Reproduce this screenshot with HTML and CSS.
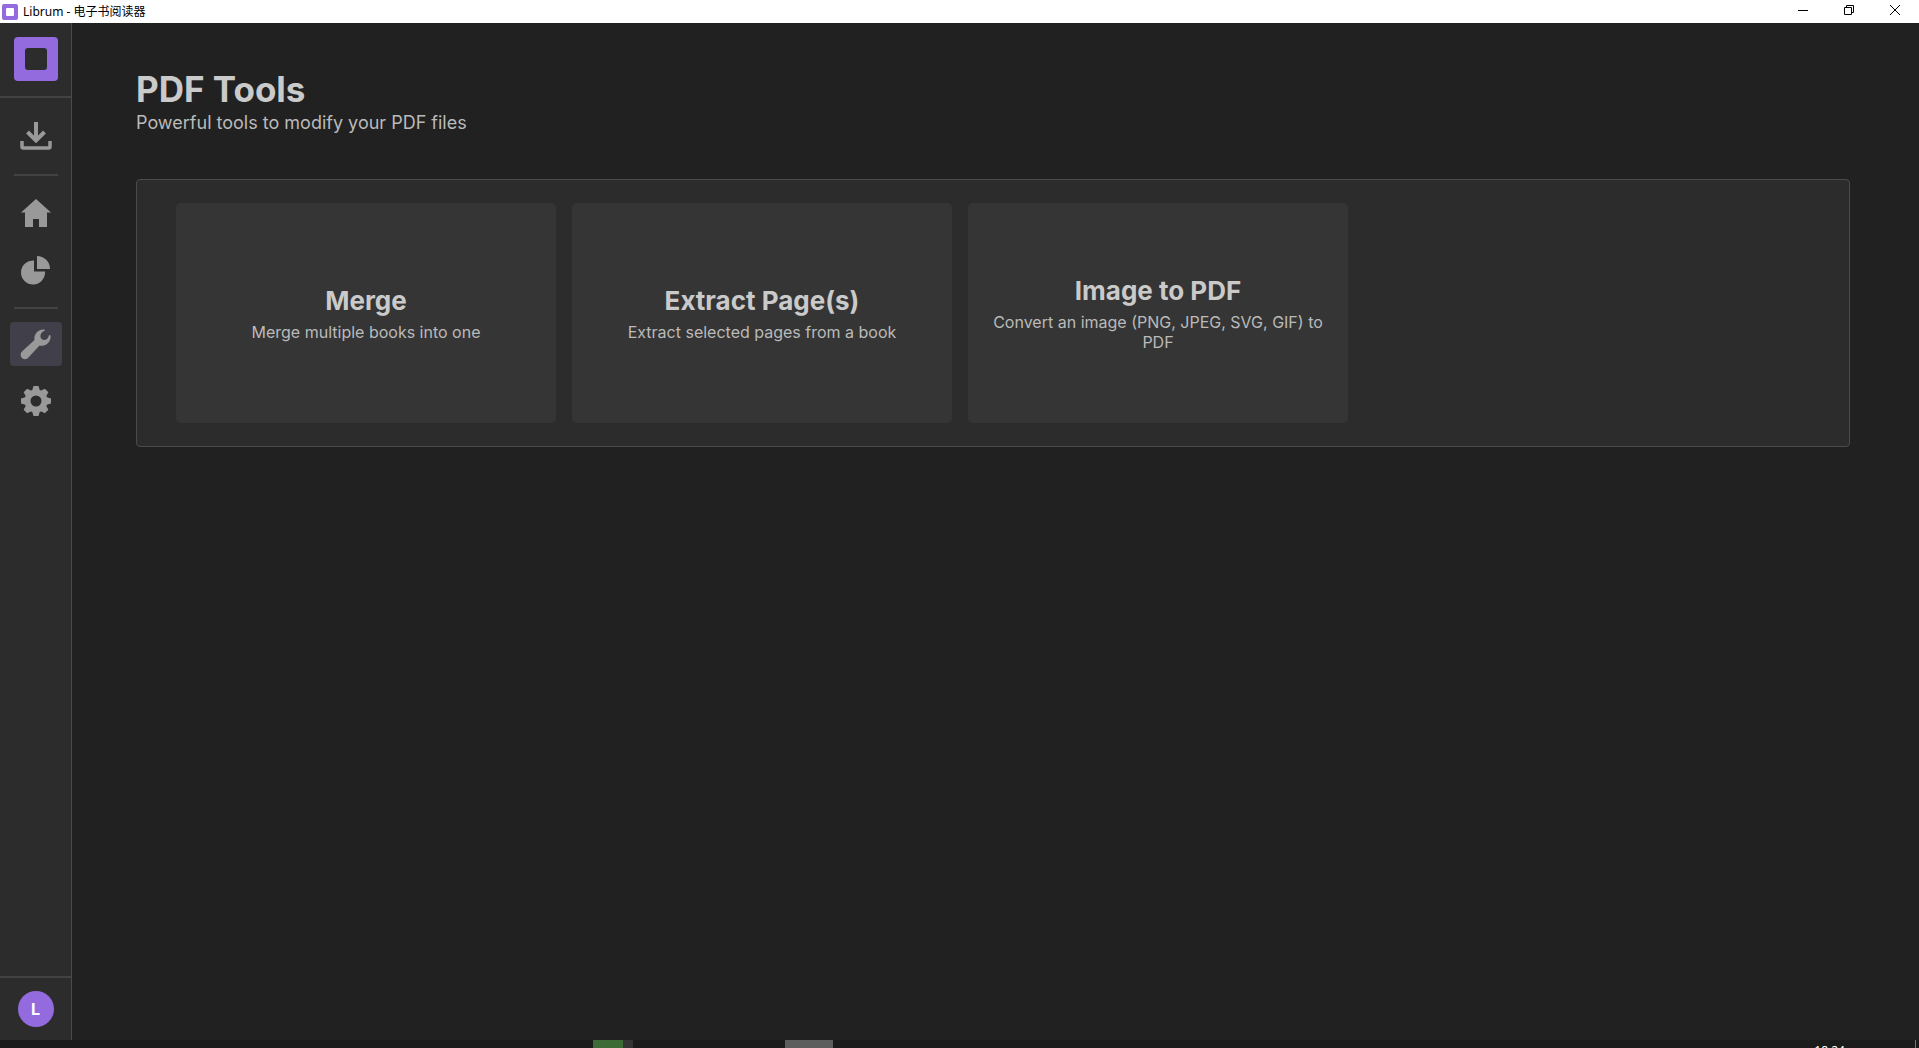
FILE: index.html
```html
<!DOCTYPE html>
<html lang="zh-CN">
<head>
<meta charset="utf-8">
<title>Librum - 电子书阅读器</title>
<link rel="stylesheet" href="styles.css">
</head>
<body>
<header class="titlebar">
  <svg class="app-icon" viewBox="0 0 16 16" aria-hidden="true"><rect width="16" height="16" rx="2" fill="#946bde"/><rect x="4" y="4" width="8" height="8" rx="1" fill="#fff"/></svg>
  <span class="window-title">Librum - 电子书阅读器</span>
  <div class="window-controls">
    <button class="window-button" aria-label="Minimize"><svg viewBox="0 0 10 10"><path d="M0 5.500h10"/></svg></button>
    <button class="window-button" aria-label="Restore"><svg viewBox="0 0 10 10"><path d="M.5 2.500h7v7h-7zM2.500 2.500v-2h7v7h-2"/></svg></button>
    <button class="window-button" aria-label="Close"><svg viewBox="0 0 10 10"><path d="M0 0l10 10M10 0L0 10"/></svg></button>
  </div>
</header>
<div class="workspace">
  <nav class="sidebar">
    <a class="logo" href="#" aria-label="Librum"><svg viewBox="0 0 44 44"><rect width="44" height="44" rx="4" fill="#946bde"/><rect x="11" y="11" width="22" height="22" rx="3" fill="#2c2c2c"/></svg></a>
    <hr class="rule">
    <a class="nav-item nav-item-import" href="#" aria-label="Import"><svg viewBox="0 0 32 32"><g fill="none" stroke="#999" stroke-width="4"><path d="M16 2v17M7.500 12l8.500 8.500L24.500 12" /><path d="M2 21v5.500q0 1.500 1.500 1.500h25q1.500 0 1.500-1.500V21" stroke-width="3.500"/></g></svg></a>
    <hr class="rule rule-short">
    <a class="nav-item nav-item-first" href="#" aria-label="Home"><svg viewBox="0 0 32 32"><path fill="#999" d="M16 2L31 15.500h-4V30h-8v-8h-6v8H5V15.500H1z"/></svg></a>
    <a class="nav-item nav-item-last" href="#" aria-label="Statistics"><svg viewBox="0 0 32 32"><path fill="#999" d="M14 6.500v11h11A12 12 0 1 1 14 6.500zM17 2a13 13 0 0 1 13 13H17z"/></svg></a>
    <hr class="rule rule-short">
    <a class="nav-item nav-item-active" href="#" aria-label="Tools" aria-current="page"><svg viewBox="0 0 32 32"><path fill="#999" d="M24.500 1.500A9 9 0 0 0 14.500 12L2 23.500a4.500 4.500 0 0 0 0 6.500q3 2.500 6 0L19.500 17.500A9 9 0 0 0 30.500 7.500L29 7Q28 12 24 12Q20 11.500 20.500 7.500Q21 4 24.800 2.800z"/></svg></a>
    <a class="nav-item" href="#" aria-label="Settings"><svg viewBox="0 0 32 32"><g fill="#999"><path fill-rule="evenodd" d="M16 4.500a11.500 11.500 0 1 0 0 23 11.500 11.500 0 0 0 0-23zm0 6a5.500 5.500 0 1 1 0 11 5.500 5.500 0 0 1 0-11z"/><path id="tooth" d="M13.500 1h5l1.500 5h-8z"/><use href="#tooth" transform="rotate(45 16 16)"/><use href="#tooth" transform="rotate(90 16 16)"/><use href="#tooth" transform="rotate(135 16 16)"/><use href="#tooth" transform="rotate(180 16 16)"/><use href="#tooth" transform="rotate(225 16 16)"/><use href="#tooth" transform="rotate(270 16 16)"/><use href="#tooth" transform="rotate(315 16 16)"/></g></svg></a>
    <div class="profile"><button class="avatar" aria-label="Profile">L</button></div>
  </nav>
  <main class="content">
    <h1 class="page-title">PDF Tools</h1>
    <p class="page-subtitle">Powerful tools to modify your PDF files</p>
    <section class="tools" aria-label="PDF Tools">
      <button class="tool"><span class="tool-name">Merge</span><span class="tool-text">Merge multiple books into one</span></button>
      <button class="tool"><span class="tool-name">Extract Page(s)</span><span class="tool-text">Extract selected pages from a book</span></button>
      <button class="tool"><span class="tool-name">Image to PDF</span><span class="tool-text">Convert an image (PNG, JPEG, SVG, GIF) to PDF</span></button>
    </section>
  </main>
</div>
<footer class="taskbar">
  <span class="task-green"></span><span class="task-side"></span><span class="task-grey"></span>
  <time class="clock">18:24</time>
  <span class="show-desktop"></span>
</footer>
</body>
</html>
```
FILE: styles.css
```css
* { box-sizing: border-box; }
body {
  margin: 0;
  height: 100vh;
  display: flex;
  flex-direction: column;
  overflow: hidden;
  background: #212121;
  color: #cacaca;
  font-family: Inter, "Noto Sans CJK SC", sans-serif;
}
button { padding: 0; border: 0; background: none; color: inherit; font: inherit; }
svg { display: block; }

.titlebar {
  display: flex;
  align-items: center;
  height: 23px;
  padding-left: 2px;
  background: #fff;
  color: #000;
}
.app-icon { width: 16px; height: 16px; }
.window-title {
  margin-left: 5px;
  font: 12px/20px "Noto Sans", "Noto Sans CJK SC", sans-serif;
}
.window-controls { display: flex; align-self: flex-start; margin: 0 1px 0 auto; }
.window-button { display: grid; place-items: center; width: 46px; height: 20px; }
.window-button svg { width: 10px; height: 10px; fill: none; stroke: #000; overflow: visible; }

.workspace { flex: 1; display: flex; min-height: 0; }
.sidebar {
  display: flex;
  flex-direction: column;
  align-items: center;
  width: 72px;
  padding-top: 14px;
  border-right: 1px solid #4a4a4a;
  background: #2c2c2c;
}
.logo { width: 44px; height: 44px; margin-bottom: 15px; }
.rule { width: 100%; height: 2px; margin: 0; border: 0; background: #424242; }
.rule-short { width: 44px; }
.nav-item {
  display: grid;
  place-items: center;
  width: 52px;
  height: 44px;
  margin-bottom: 13px;
  border-radius: 4px;
}
.nav-item svg { width: 32px; height: 32px; }
.nav-item-import { margin: 16px 0; }
.nav-item-first { margin-top: 15px; }
.nav-item-last { margin-bottom: 15px; }
.nav-item-active { margin-top: 13px; background: #403f4a; }
.profile {
  display: grid;
  place-items: center;
  width: 100%;
  height: 64px;
  margin-top: auto;
  border-top: 2px solid #424242;
}
.avatar {
  width: 36px;
  height: 36px;
  border-radius: 50%;
  background: #946bde;
  color: #fff;
  font-size: 16px;
  font-weight: 700;
}

.content { flex: 1; padding: 44px 69px 0 64px; }
.page-title { margin: 0; font-size: 35px; font-weight: 700; line-height: 44px; }
.page-subtitle { margin: 0; font-size: 18px; line-height: 24px; color: #bababa; }
.tools {
  display: flex;
  flex-wrap: wrap;
  gap: 16px;
  margin-top: 44px;
  padding: 23px 39px;
  border: 1px solid #4a4a4f;
  border-radius: 4px;
  background: #2c2c2c;
}
.tool {
  display: flex;
  flex-direction: column;
  align-items: center;
  justify-content: center;
  gap: 5px;
  width: 380px;
  height: 220px;
  padding: 0 16px;
  border-radius: 5px;
  background: #353535;
}
.tool-name { font-size: 26px; font-weight: 700; line-height: 32px; }
.tool-text { font-size: 16px; line-height: 20px; color: #bababa; }

.taskbar {
  display: flex;
  height: 8px;
  padding: 0 3px 0 593px;
  overflow: hidden;
  background: #1b1b1b;
}
.task-green { width: 30px; background: #3d6b35; }
.task-side { width: 10px; background: #343434; }
.task-grey { width: 48px; margin-left: 152px; background: #5d5d5d; }
.clock { margin-left: auto; padding-top: 3px; font: 12px/16px "Noto Sans", sans-serif; color: #fff; }
.show-desktop { width: 1px; margin-left: 70px; background: #777; }
```
